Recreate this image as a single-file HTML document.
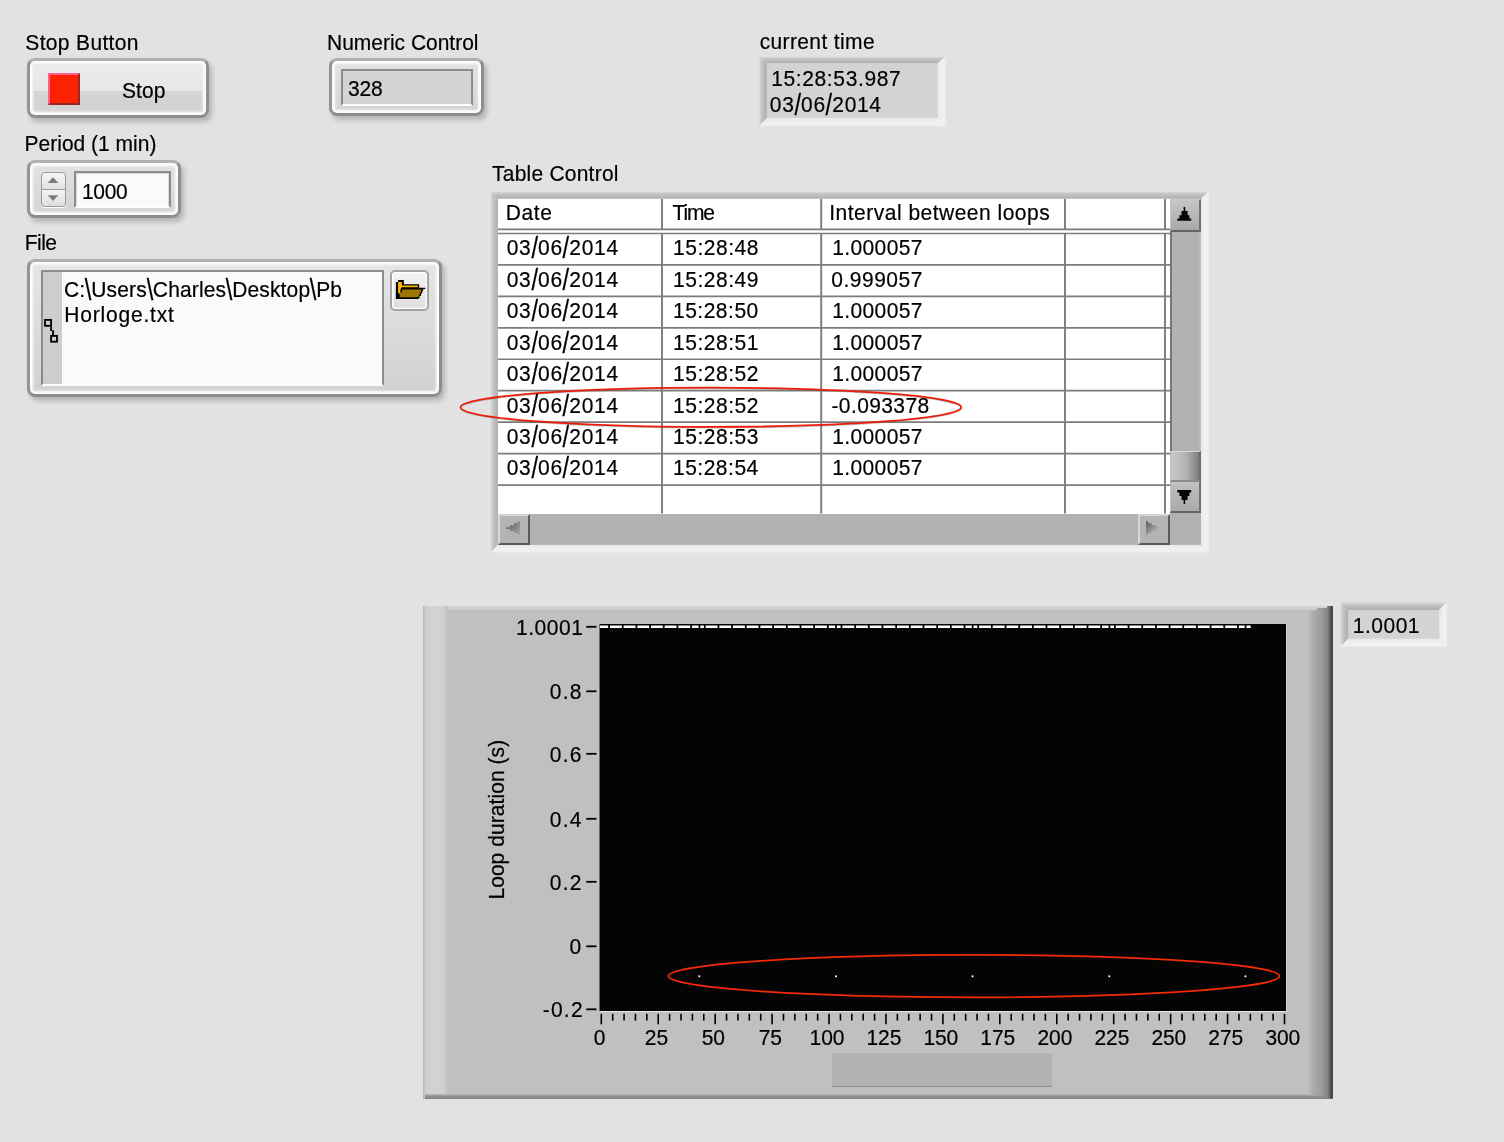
<!DOCTYPE html>
<html><head><meta charset="utf-8"><title>Front Panel</title>
<style>
html,body{margin:0;padding:0}
body{width:1504px;height:1142px;background:#e2e2e2;position:relative;overflow:hidden;font-family:"Liberation Sans",sans-serif}
.t{position:absolute;white-space:pre;font:21px/24px "Liberation Sans",sans-serif;color:#000;-webkit-text-stroke:0.2px #000;transform-origin:0 19.28px;transform:scaleY(1.065)}
.t i{display:inline-block;font-style:normal;transform:translateY(0.6px) scale(1.12,1.33)}
.abs{position:absolute;box-sizing:border-box}
.silver{position:absolute;box-sizing:border-box;border:3px solid;border-color:#b0b0b0 #8f8f8f #8c8c8c #949494;border-radius:8px;
  background:linear-gradient(#e3e3e3,#d3d3d3);box-shadow:inset 0 0 0 2.5px #fbfbfb, inset 0 0 2px 3.5px #eeeeee, 3px 4px 5px rgba(0,0,0,.2)}
.sunk{position:absolute;box-sizing:border-box;border:2px solid #8b8b8b;border-bottom-color:#fdfdfd}
svg{position:absolute;left:0;top:0;overflow:visible}
</style></head><body>

<svg width="1504" height="1142" viewBox="0 0 1504 1142">
<defs>
<linearGradient id="gT" x1="0" y1="0" x2="0" y2="1"><stop offset="0" stop-color="#dedede"/><stop offset="0.35" stop-color="#c6c6c6"/><stop offset="1" stop-color="#adadad"/></linearGradient>
<linearGradient id="gL" x1="0" y1="0" x2="1" y2="0"><stop offset="0" stop-color="#dadada"/><stop offset="0.35" stop-color="#c4c4c4"/><stop offset="1" stop-color="#adadad"/></linearGradient>
<linearGradient id="gR" x1="0" y1="0" x2="1" y2="0"><stop offset="0" stop-color="#e9e9e9"/><stop offset="0.6" stop-color="#f1f1f1"/><stop offset="1" stop-color="#eeeeee"/></linearGradient>
<linearGradient id="gB" x1="0" y1="0" x2="0" y2="1"><stop offset="0" stop-color="#e9e9e9"/><stop offset="0.6" stop-color="#f1f1f1"/><stop offset="1" stop-color="#eeeeee"/></linearGradient>
<linearGradient id="gArrL" x1="0" y1="0" x2="1" y2="1"><stop offset="0" stop-color="#5e5e5e"/><stop offset="1" stop-color="#a4a4a4"/></linearGradient>
<linearGradient id="gArrR" x1="0" y1="0" x2="0.9" y2="1"><stop offset="0" stop-color="#5a5a5a"/><stop offset="0.45" stop-color="#8c8c8c"/><stop offset="0.8" stop-color="#b2b2b2"/></linearGradient>
</defs>
<rect x="766.30" y="62.50" width="172.00" height="55.90" fill="#d3d3d3"/>
<polygon points="759.20,56.40 945.90,56.40 937.80,63.00 766.80,63.00" fill="url(#gT)"/>
<polygon points="759.20,56.40 766.80,63.00 766.80,117.90 759.20,126.60" fill="url(#gL)"/>
<polygon points="945.90,56.40 945.90,126.60 937.80,117.90 937.80,63.00" fill="url(#gR)"/>
<polygon points="759.20,126.60 945.90,126.60 937.80,117.90 766.80,117.90" fill="url(#gB)"/>
<rect x="497.40" y="198.30" width="704.00" height="347.00" fill="#ffffff"/>
<polygon points="490.60,191.20 1208.90,191.20 1200.90,198.80 497.90,198.80" fill="url(#gT)"/>
<polygon points="490.60,191.20 497.90,198.80 497.90,544.80 490.60,552.60" fill="url(#gL)"/>
<polygon points="1208.90,191.20 1208.90,552.60 1200.90,544.80 1200.90,198.80" fill="url(#gR)"/>
<polygon points="490.60,552.60 1208.90,552.60 1200.90,544.80 497.90,544.80" fill="url(#gB)"/>
<rect x="1347.60" y="609.50" width="92.20" height="29.80" fill="#d3d3d3"/>
<polygon points="1340.50,602.00 1446.90,602.00 1439.30,610.00 1348.10,610.00" fill="url(#gT)"/>
<polygon points="1340.50,602.00 1348.10,610.00 1348.10,638.80 1340.50,647.00" fill="url(#gL)"/>
<polygon points="1446.90,602.00 1446.90,647.00 1439.30,638.80 1439.30,610.00" fill="url(#gR)"/>
<polygon points="1340.50,647.00 1446.90,647.00 1439.30,638.80 1348.10,638.80" fill="url(#gB)"/>
</svg>

<!-- Stop button -->
<div class="silver" style="left:27px;top:58px;width:182px;height:60px;background:linear-gradient(#ececec 0,#e7e7e7 55%,#d5d5d5 56%,#d2d2d2 85%,#d8d8d8 100%)"></div>
<div class="abs" style="left:48px;top:73px;width:32px;height:32px;background:#ff2200;border:2px solid;border-color:#ff6090 #97281e #97281e #ff6090"></div>

<!-- Numeric control -->
<div class="silver" style="left:329px;top:58px;width:155px;height:58px"></div>
<div class="sunk" style="left:340.5px;top:68.8px;width:132.5px;height:37.4px;background:#d3d3d3"></div>

<!-- Period -->
<div class="silver" style="left:27px;top:160px;width:154px;height:58px"></div>
<div class="sunk" style="left:73.6px;top:171.4px;width:97px;height:36.4px;background:#fafafa;box-shadow:inset 1px 1px 0 #dadada,inset -1px 0 0 #dadada"></div>
<div class="abs" style="left:40.6px;top:171.6px;width:25.4px;height:35px;border:1.2px solid #9a9a9a;border-radius:4px;background:linear-gradient(#f6f6f6 0,#e2e2e2 47%,#9c9c9c 47%,#9c9c9c 51%,#f4f4f4 51%,#dedede 100%);box-shadow:0 1px 0 #fff"></div>

<!-- File path -->
<div class="silver" style="left:27px;top:259px;width:415px;height:138px;background:linear-gradient(#e6e6e6,#d0d0d0)"></div>
<div class="sunk" style="left:41px;top:270px;width:343px;height:116px;background:linear-gradient(90deg,#cdcdcd 0,#cdcdcd 19px,#fafafa 19px)"></div>
<div class="abs" style="left:390px;top:270px;width:39px;height:41px;border:2px solid #a4a4a4;border-radius:5px;background:linear-gradient(#f4f4f4,#dedede);box-shadow:inset 0 0 0 1.5px #fdfdfd"></div>

<!-- Table scrollbars -->
<div class="abs" style="left:1170.3px;top:199px;width:30.5px;height:346px;background:linear-gradient(90deg,#b2b2b2 0,#b2b2b2 92%,#c4c4c4 100%)"></div>
<div class="abs" style="left:498px;top:513.5px;width:703px;height:31.3px;background:#b2b2b2"></div>
<div class="abs sb" style="left:1170.3px;top:199px;width:30.5px;height:32.5px;background:linear-gradient(#c6c6c6,#a8a8a8);border:solid;border-width:1px 2px 2.5px 1.5px;border-color:#c8c8c8 #707070 #646464 #c4c4c4"></div>
<div class="abs sb" style="left:1170.3px;top:481.2px;width:30.5px;height:32px;background:linear-gradient(#c0c0c0,#aaaaaa);border:solid;border-width:1px 2px 2.5px 1.5px;border-color:#d0d0d0 #707070 #646464 #c4c4c4"></div>
<div class="abs sb" style="left:1170.3px;top:451px;width:30.5px;height:30.5px;background:linear-gradient(90deg,#c8c8c8,#b2b2b2 55%,#7c7c7c);border:solid;border-width:1px 2px 2px 1px;border-color:#d8d8d8 #6c6c6c #8a8a8a #c4c4c4"></div>
<div class="abs sb" style="left:498px;top:513.7px;width:31.5px;height:31px;background:#b4b4b4;border:solid;border-width:2px;border-color:#d4d4d4 #5c5c5c #5a5a5a #d8d8d8"></div>
<div class="abs sb" style="left:1138px;top:513.7px;width:32px;height:31px;background:#b4b4b4;border:solid;border-width:2px;border-color:#d4d4d4 #5c5c5c #5a5a5a #d8d8d8"></div>

<!-- Chart frame -->
<div class="abs" style="left:423.3px;top:605.6px;width:909.7px;height:493.2px;background:#c0c0c0"></div>
<div class="abs" style="left:423.3px;top:605.6px;width:909.7px;height:4.8px;background:linear-gradient(#d4d4d4,#d0d0d0 80%,#c4c4c4)"></div>
<div class="abs" style="left:423.3px;top:605.6px;width:25px;height:493.2px;background:linear-gradient(90deg,#b6b6b6 0,#bcbcbc 5%,#cecece 9%,#d2d2d2 40%,#d0d0d0 84%,#c0c0c0 100%)"></div>
<div class="abs" style="left:1306.5px;top:605.6px;width:26.5px;height:493.2px;background:linear-gradient(90deg,#c0c0c0 0,#ababab 25%,#9a9a9a 56%,#828282 80%,#555 91%,#444 95%,#484848 100%);clip-path:polygon(0 4.8px,10.5px 4.8px,10.5px 2.5px,20.5px 2.5px,20.5px 0.3px,100% 0.3px,100% 100%,0 100%)"></div>
<div class="abs" style="left:425px;top:1094px;width:908px;height:4.8px;background:linear-gradient(#b6b6b6,#8a8a8a 60%,#848484);mix-blend-mode:darken"></div>
<!-- plot -->
<div class="abs" style="left:598.8px;top:623.8px;width:687.4px;height:388.2px;background:#040404;border-left:1.2px solid #6a6a6a;border-bottom:1.3px solid #e6e6e6;box-shadow:1px 0 0 #d6d6d6"></div>
<!-- x label box -->
<div class="abs" style="left:832px;top:1053px;width:220px;height:34px;background:#b2b2b2;border-bottom:1.3px solid #8e8e8e"></div>

<svg width="1504" height="1142" viewBox="0 0 1504 1142">
<g stroke="#7c7c7c" stroke-width="1.7" fill="none">
<path d="M498 229.4H1170.5 M498 233.5H1170.5"/>
<path d="M498 264.90H1170.5 M498 296.35H1170.5 M498 327.80H1170.5 M498 359.25H1170.5 M498 390.70H1170.5 M498 422.15H1170.5 M498 453.60H1170.5 M498 485.05H1170.5"/>
<path d="M662 199V229.4M662 233.5V513.5" stroke-width="1.9"/>
<path d="M821.2 199V229.4M821.2 233.5V513.5" stroke-width="1.9"/>
<path d="M1065 199V229.4M1065 233.5V513.5" stroke-width="1.9"/>
<path d="M1165 199V229.4M1165 233.5V513.5" stroke-width="1.9"/>
</g>
<path d="M1171 231.5V451" stroke="#686868" stroke-width="1.6"/>
<g stroke="#000" stroke-width="1.8">
<path d="M586.3 626.8H596.5"/>
<path d="M586.3 691.3H596.5"/>
<path d="M586.3 753.8H596.5"/>
<path d="M586.3 818.8H596.5"/>
<path d="M586.3 881.8H596.5"/>
<path d="M586.3 946.3H596.5"/>
<path d="M586.3 1009.3H596.5"/>
</g>
<g stroke="#000" stroke-width="1.6">
<path d="M601.30 1013.8V1024.3"/>
<path d="M612.69 1013.8V1020.6"/>
<path d="M624.07 1013.8V1020.6"/>
<path d="M635.46 1013.8V1020.6"/>
<path d="M646.85 1013.8V1020.6"/>
<path d="M658.23 1013.8V1024.3"/>
<path d="M669.62 1013.8V1020.6"/>
<path d="M681.01 1013.8V1020.6"/>
<path d="M692.39 1013.8V1020.6"/>
<path d="M703.78 1013.8V1020.6"/>
<path d="M715.17 1013.8V1024.3"/>
<path d="M726.55 1013.8V1020.6"/>
<path d="M737.94 1013.8V1020.6"/>
<path d="M749.33 1013.8V1020.6"/>
<path d="M760.71 1013.8V1020.6"/>
<path d="M772.10 1013.8V1024.3"/>
<path d="M783.49 1013.8V1020.6"/>
<path d="M794.87 1013.8V1020.6"/>
<path d="M806.26 1013.8V1020.6"/>
<path d="M817.65 1013.8V1020.6"/>
<path d="M829.03 1013.8V1024.3"/>
<path d="M840.42 1013.8V1020.6"/>
<path d="M851.81 1013.8V1020.6"/>
<path d="M863.19 1013.8V1020.6"/>
<path d="M874.58 1013.8V1020.6"/>
<path d="M885.97 1013.8V1024.3"/>
<path d="M897.35 1013.8V1020.6"/>
<path d="M908.74 1013.8V1020.6"/>
<path d="M920.13 1013.8V1020.6"/>
<path d="M931.51 1013.8V1020.6"/>
<path d="M942.90 1013.8V1024.3"/>
<path d="M954.29 1013.8V1020.6"/>
<path d="M965.67 1013.8V1020.6"/>
<path d="M977.06 1013.8V1020.6"/>
<path d="M988.45 1013.8V1020.6"/>
<path d="M999.83 1013.8V1024.3"/>
<path d="M1011.22 1013.8V1020.6"/>
<path d="M1022.61 1013.8V1020.6"/>
<path d="M1033.99 1013.8V1020.6"/>
<path d="M1045.38 1013.8V1020.6"/>
<path d="M1056.77 1013.8V1024.3"/>
<path d="M1068.15 1013.8V1020.6"/>
<path d="M1079.54 1013.8V1020.6"/>
<path d="M1090.93 1013.8V1020.6"/>
<path d="M1102.31 1013.8V1020.6"/>
<path d="M1113.70 1013.8V1024.3"/>
<path d="M1125.09 1013.8V1020.6"/>
<path d="M1136.47 1013.8V1020.6"/>
<path d="M1147.86 1013.8V1020.6"/>
<path d="M1159.25 1013.8V1020.6"/>
<path d="M1170.63 1013.8V1024.3"/>
<path d="M1182.02 1013.8V1020.6"/>
<path d="M1193.41 1013.8V1020.6"/>
<path d="M1204.79 1013.8V1020.6"/>
<path d="M1216.18 1013.8V1020.6"/>
<path d="M1227.57 1013.8V1024.3"/>
<path d="M1238.95 1013.8V1020.6"/>
<path d="M1250.34 1013.8V1020.6"/>
<path d="M1261.73 1013.8V1020.6"/>
<path d="M1273.11 1013.8V1020.6"/>
<path d="M1284.50 1013.8V1024.3"/>
</g>
<path d="M600 626.7H1252.5" stroke="#fff" stroke-width="2.4" stroke-dasharray="11.9 1.77" stroke-dashoffset="3.7"/>
<rect x="698.60" y="625" width="1.7" height="3.6" fill="#040404"/>
<rect x="835.20" y="625" width="1.7" height="3.6" fill="#040404"/>
<rect x="971.80" y="625" width="1.7" height="3.6" fill="#040404"/>
<rect x="1108.60" y="625" width="1.7" height="3.6" fill="#040404"/>
<rect x="1244.70" y="625" width="1.7" height="3.6" fill="#040404"/>
<rect x="698.40" y="975.4" width="1.8" height="1.8" fill="#fff"/>
<rect x="835.00" y="975.4" width="1.8" height="1.8" fill="#fff"/>
<rect x="971.60" y="975.4" width="1.8" height="1.8" fill="#fff"/>
<rect x="1108.40" y="975.4" width="1.8" height="1.8" fill="#fff"/>
<rect x="1244.50" y="975.4" width="1.8" height="1.8" fill="#fff"/>
<ellipse cx="973.9" cy="976.1" rx="305.6" ry="21.2" fill="none" stroke="#f22a08" stroke-width="1.85"/>
<!-- table highlight ellipse -->
<ellipse cx="711" cy="408.1" rx="250.4" ry="19.6" fill="none" stroke="rgba(60,80,80,.35)" stroke-width="1.6"/><ellipse cx="710.8" cy="407.3" rx="250.4" ry="19.6" fill="none" stroke="#ee1c0a" stroke-width="1.8"/>
<!-- scroll arrows -->
<path d="M1183.6 207.1H1185.2V211H1187.6V215.2H1189.4V218.6H1191.2V220.7H1177.3V218.6H1179.4V215.2H1181.5V211H1183.6Z" fill="#050505"/>
<path d="M1183.6 504H1185.2V500.1H1187.6V496H1189.4V492.5H1191.2V489.9H1177.3V492.5H1179.4V496H1181.5V500.1H1183.6Z" fill="#050505"/>
<path d="M506.1 527.2H509.8V525.2H514V523.1H518V521.3H519.8V534.9H518V533.1H514V531H509.8V528.9H506.1Z" fill="url(#gArrL)"/>
<path d="M1146 521.3H1148.1V522.9H1151.8V525H1155.8V527.1H1159.8V528.7H1155.8V530.7H1151.8V533H1148.1V535.1H1146Z" fill="url(#gArrR)"/>
<!-- spinner arrows -->
<path d="M53 177.3 L58.4 183 H47.7Z" fill="#7c7c7c"/>
<path d="M53 201 L58.4 195.2 H47.7Z" fill="#7c7c7c"/>
<!-- path icon -->
<g fill="none" stroke="#000" stroke-width="1.8"><rect x="45" y="319.9" width="6.1" height="5.9"/><rect x="51.1" y="335.9" width="5.9" height="5.8"/><path d="M51.1 326.5V331M53.05 330.3V335.5"/></g>
<!-- folder icon -->
<g>
<path d="M398.1 279.9H403.8V284.3H419.2V287.8H425.3V288.9H423.2V291H422.2V293.5H421V296H419.6V298H418.7V298.9H395.9V281.9H398.1Z" fill="#000"/>
<path d="M398.1 281.9H401.9V285.6H417.8V287.3H401.7L400.4 289.6V293.5H398.1Z" fill="#fdb900"/>
<path d="M401.9 289.5H421.6L418.4 297.3H399.6V292.6H401.9Z" fill="#9d7706"/>
</g>
</svg>

<span class="t" style="left:25.30px;top:30.52px;letter-spacing:0.340px;">Stop Button</span>
<span class="t" style="left:327.05px;top:30.72px;letter-spacing:-0.021px;">Numeric Control</span>
<span class="t" style="left:759.70px;top:30.22px;letter-spacing:0.364px;">current time</span>
<span class="t" style="left:121.90px;top:79.22px;letter-spacing:0.083px;">Stop</span>
<span class="t" style="left:348.05px;top:77.02px;letter-spacing:-0.150px;">328</span>
<span class="t" style="left:771.20px;top:67.42px;letter-spacing:0.627px;">15:28:53.987</span>
<span class="t" style="left:769.85px;top:92.92px;letter-spacing:0.672px;">03<i>/</i>06<i>/</i>2014</span>
<span class="t" style="left:24.55px;top:132.02px;letter-spacing:-0.004px;">Period (1 min)</span>
<span class="t" style="left:82.00px;top:179.72px;letter-spacing:-0.333px;">1000</span>
<span class="t" style="left:24.65px;top:230.72px;letter-spacing:-0.483px;">File</span>
<span class="t" style="left:64.00px;top:277.72px;letter-spacing:0.144px;">C:<i>\</i>Users<i>\</i>Charles<i>\</i>Desktop<i>\</i>Pb</span>
<span class="t" style="left:64.25px;top:302.72px;letter-spacing:0.800px;">Horloge.txt</span>
<span class="t" style="left:492.00px;top:161.72px;letter-spacing:0.229px;">Table Control</span>
<span class="t" style="left:505.75px;top:201.12px;letter-spacing:0.583px;">Date</span>
<span class="t" style="left:672.50px;top:201.12px;letter-spacing:-1.167px;">Time</span>
<span class="t" style="left:829.30px;top:201.12px;letter-spacing:0.488px;">Interval between loops</span>
<span class="t" style="left:506.75px;top:236.32px;letter-spacing:0.694px;">03<i>/</i>06<i>/</i>2014</span>
<span class="t" style="left:673.00px;top:236.32px;letter-spacing:0.536px;">15:28:48</span>
<span class="t" style="left:832.30px;top:236.32px;letter-spacing:0.357px;">1.000057</span>
<span class="t" style="left:506.75px;top:267.77px;letter-spacing:0.694px;">03<i>/</i>06<i>/</i>2014</span>
<span class="t" style="left:673.00px;top:267.77px;letter-spacing:0.536px;">15:28:49</span>
<span class="t" style="left:831.25px;top:267.77px;letter-spacing:0.507px;">0.999057</span>
<span class="t" style="left:506.75px;top:299.22px;letter-spacing:0.694px;">03<i>/</i>06<i>/</i>2014</span>
<span class="t" style="left:673.00px;top:299.22px;letter-spacing:0.500px;">15:28:50</span>
<span class="t" style="left:832.30px;top:299.22px;letter-spacing:0.357px;">1.000057</span>
<span class="t" style="left:506.75px;top:330.67px;letter-spacing:0.694px;">03<i>/</i>06<i>/</i>2014</span>
<span class="t" style="left:673.00px;top:330.67px;letter-spacing:0.536px;">15:28:51</span>
<span class="t" style="left:832.30px;top:330.67px;letter-spacing:0.357px;">1.000057</span>
<span class="t" style="left:506.75px;top:362.12px;letter-spacing:0.694px;">03<i>/</i>06<i>/</i>2014</span>
<span class="t" style="left:673.00px;top:362.12px;letter-spacing:0.536px;">15:28:52</span>
<span class="t" style="left:832.30px;top:362.12px;letter-spacing:0.357px;">1.000057</span>
<span class="t" style="left:506.75px;top:393.57px;letter-spacing:0.694px;">03<i>/</i>06<i>/</i>2014</span>
<span class="t" style="left:673.00px;top:393.57px;letter-spacing:0.536px;">15:28:52</span>
<span class="t" style="left:831.50px;top:393.57px;letter-spacing:0.381px;">-0.093378</span>
<span class="t" style="left:506.75px;top:425.02px;letter-spacing:0.694px;">03<i>/</i>06<i>/</i>2014</span>
<span class="t" style="left:673.00px;top:425.02px;letter-spacing:0.536px;">15:28:53</span>
<span class="t" style="left:832.30px;top:425.02px;letter-spacing:0.357px;">1.000057</span>
<span class="t" style="left:506.75px;top:456.47px;letter-spacing:0.694px;">03<i>/</i>06<i>/</i>2014</span>
<span class="t" style="left:673.00px;top:456.47px;letter-spacing:0.500px;">15:28:54</span>
<span class="t" style="left:832.30px;top:456.47px;letter-spacing:0.357px;">1.000057</span>
<span class="t" style="left:516.00px;top:615.72px;letter-spacing:0.550px;">1.0001</span>
<span class="t" style="left:549.75px;top:680.22px;letter-spacing:1.200px;">0.8</span>
<span class="t" style="left:549.75px;top:742.72px;letter-spacing:1.200px;">0.6</span>
<span class="t" style="left:549.75px;top:807.72px;letter-spacing:1.200px;">0.4</span>
<span class="t" style="left:549.75px;top:870.72px;letter-spacing:1.200px;">0.2</span>
<span class="t" style="left:569.45px;top:935.22px;letter-spacing:0.000px;">0</span>
<span class="t" style="left:542.80px;top:998.22px;letter-spacing:1.200px;">-0.2</span>
<span class="t" style="left:593.85px;top:1026.22px;letter-spacing:-0.100px;">0</span>
<span class="t" style="left:644.83px;top:1026.22px;letter-spacing:-0.100px;">25</span>
<span class="t" style="left:701.77px;top:1026.22px;letter-spacing:-0.100px;">50</span>
<span class="t" style="left:758.70px;top:1026.22px;letter-spacing:-0.100px;">75</span>
<span class="t" style="left:809.56px;top:1026.22px;letter-spacing:-0.100px;">100</span>
<span class="t" style="left:866.49px;top:1026.22px;letter-spacing:-0.100px;">125</span>
<span class="t" style="left:923.42px;top:1026.22px;letter-spacing:-0.100px;">150</span>
<span class="t" style="left:980.36px;top:1026.22px;letter-spacing:-0.100px;">175</span>
<span class="t" style="left:1037.54px;top:1026.22px;letter-spacing:-0.100px;">200</span>
<span class="t" style="left:1094.47px;top:1026.22px;letter-spacing:-0.100px;">225</span>
<span class="t" style="left:1151.41px;top:1026.22px;letter-spacing:-0.100px;">250</span>
<span class="t" style="left:1208.34px;top:1026.22px;letter-spacing:-0.100px;">275</span>
<span class="t" style="left:1265.40px;top:1026.22px;letter-spacing:-0.100px;">300</span>
<span class="t" style="left:1352.80px;top:613.72px;letter-spacing:0.490px;">1.0001</span>
<span class="t" style="left:0;top:0;transform-origin:0 0;transform:translate(503.8px,899.6px) rotate(-90deg) scaleY(1.065) translateY(-19.28px);letter-spacing:0.06px">Loop duration (s)</span>
</body></html>
